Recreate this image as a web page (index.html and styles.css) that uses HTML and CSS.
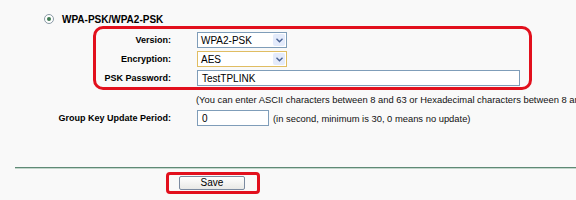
FILE: index.html
```html
<!DOCTYPE html>
<html lang="en">
<head>
  <meta charset="UTF-8" />
  <title>Wireless Security</title>
  <link rel="stylesheet" href="styles.css">
</head>
<body>
  <div class="head">
    <span class="radio"><span class="dot"></span></span>
    <span class="title">WPA-PSK/WPA2-PSK</span>
  </div>

  <div class="mark-box">
    <div class="row">
      <label class="lbl">Version:</label>
      <div class="select">
        <span class="val">WPA2-PSK</span>
        <span class="arrow"><svg width="7" height="5" viewBox="0 0 7 5"><path d="M0.5 0.8 L3.5 3.8 L6.5 0.8" fill="none" stroke="#4a6396" stroke-width="1.4"/></svg></span>
      </div>
    </div>
    <div class="row">
      <label class="lbl">Encryption:</label>
      <div class="select focus">
        <span class="val">AES</span>
        <span class="arrow"><svg width="7" height="5" viewBox="0 0 7 5"><path d="M0.5 0.8 L3.5 3.8 L6.5 0.8" fill="none" stroke="#4a6396" stroke-width="1.4"/></svg></span>
      </div>
    </div>
    <div class="row">
      <label class="lbl">PSK Password:</label>
      <div class="input wide">TestTPLINK</div>
    </div>
  </div>

  <div class="note">(You can enter ASCII characters between 8 and 63 or Hexadecimal characters between 8 and 64.)</div>

  <div class="row group">
    <label class="lbl">Group Key Update Period:</label>
    <div class="input short">0</div>
    <span class="hint">(in second, minimum is 30, 0 means no update)</span>
  </div>

  <div class="divider"></div>

  <div class="save-box">
    <button class="btn">Save</button>
  </div>
</body>
</html>
```

FILE: styles.css
```css
body {
  margin: 0;
  width: 576px;
  height: 200px;
  overflow: hidden;
  background: #f9f9f9;
  color: #000;
  font-family: "Liberation Sans", Arial, sans-serif;
  font-size: 9px;
}
.head {
  display: flex;
  align-items: center;
  height: 14px;
  padding-top: 12px;
  padding-left: 44px;
}
.radio {
  width: 8px;
  height: 8px;
  border: 1px solid #8a9aa6;
  border-radius: 50%;
  background: #fff;
  display: flex;
  align-items: center;
  justify-content: center;
  margin-right: 8px;
}
.dot {
  width: 4px;
  height: 4px;
  border-radius: 50%;
  background: #3f7a52;
}
.title {
  font-weight: bold;
  font-size: 10px;
}
.mark-box {
  box-sizing: border-box;
  margin-left: 93px;
  width: 439px;
  height: 64px;
  border: 3px solid #e2101d;
  border-radius: 10px;
  padding: 3px 0 1px;
  display: flex;
  flex-direction: column;
  gap: 3px;
}
.row {
  display: flex;
  align-items: center;
  height: 16px;
  gap: 26px;
}
.lbl {
  width: 75px;
  text-align: right;
  font-weight: bold;
  white-space: nowrap;
}
.select, .input {
  box-sizing: border-box;
  height: 16px;
  border: 1px solid #7f9db9;
  background: #fff;
  font-size: 10px;
  display: flex;
  align-items: center;
}
.select {
  width: 90px;
}
.select.focus {
  border-color: #e0bd62;
}
.val {
  flex: 1;
  padding-left: 3px;
}
.arrow {
  width: 12px;
  height: 12px;
  margin-right: 1px;
  background: #e4ebfb;
  border-radius: 2px;
  display: flex;
  align-items: center;
  justify-content: center;
}
.input {
  padding-left: 4px;
}
.input.wide {
  width: 323px;
}
.input.short {
  width: 72px;
}
.note {
  margin-top: 4px;
  padding-left: 196px;
  line-height: 12px;
  font-size: 9.4px;
  color: #111;
  white-space: nowrap;
}
.group {
  margin-top: 4px;
}
.group .lbl {
  width: 171px;
}
.hint {
  margin-left: -22px;
  font-size: 9.4px;
  color: #111;
  white-space: nowrap;
}
.divider {
  margin-top: 41px;
  margin-left: 15px;
  height: 1px;
  background: #5f8a76;
  border-bottom: 1px solid #c3d6cc;
}
.save-box {
  box-sizing: border-box;
  margin-top: 3px;
  margin-left: 166px;
  width: 94px;
  height: 22px;
  border: 3px solid #e2101d;
  border-radius: 4px;
  padding: 1px 0 0 10px;
}
.btn {
  box-sizing: border-box;
  width: 66px;
  height: 14px;
  padding: 0;
  border: 1px solid #7b8aa0;
  border-radius: 2px;
  background: linear-gradient(#ffffff, #e9e9e6);
  font-family: "Liberation Sans", Arial, sans-serif;
  font-size: 10px;
  line-height: 12px;
  color: #000;
}
```
